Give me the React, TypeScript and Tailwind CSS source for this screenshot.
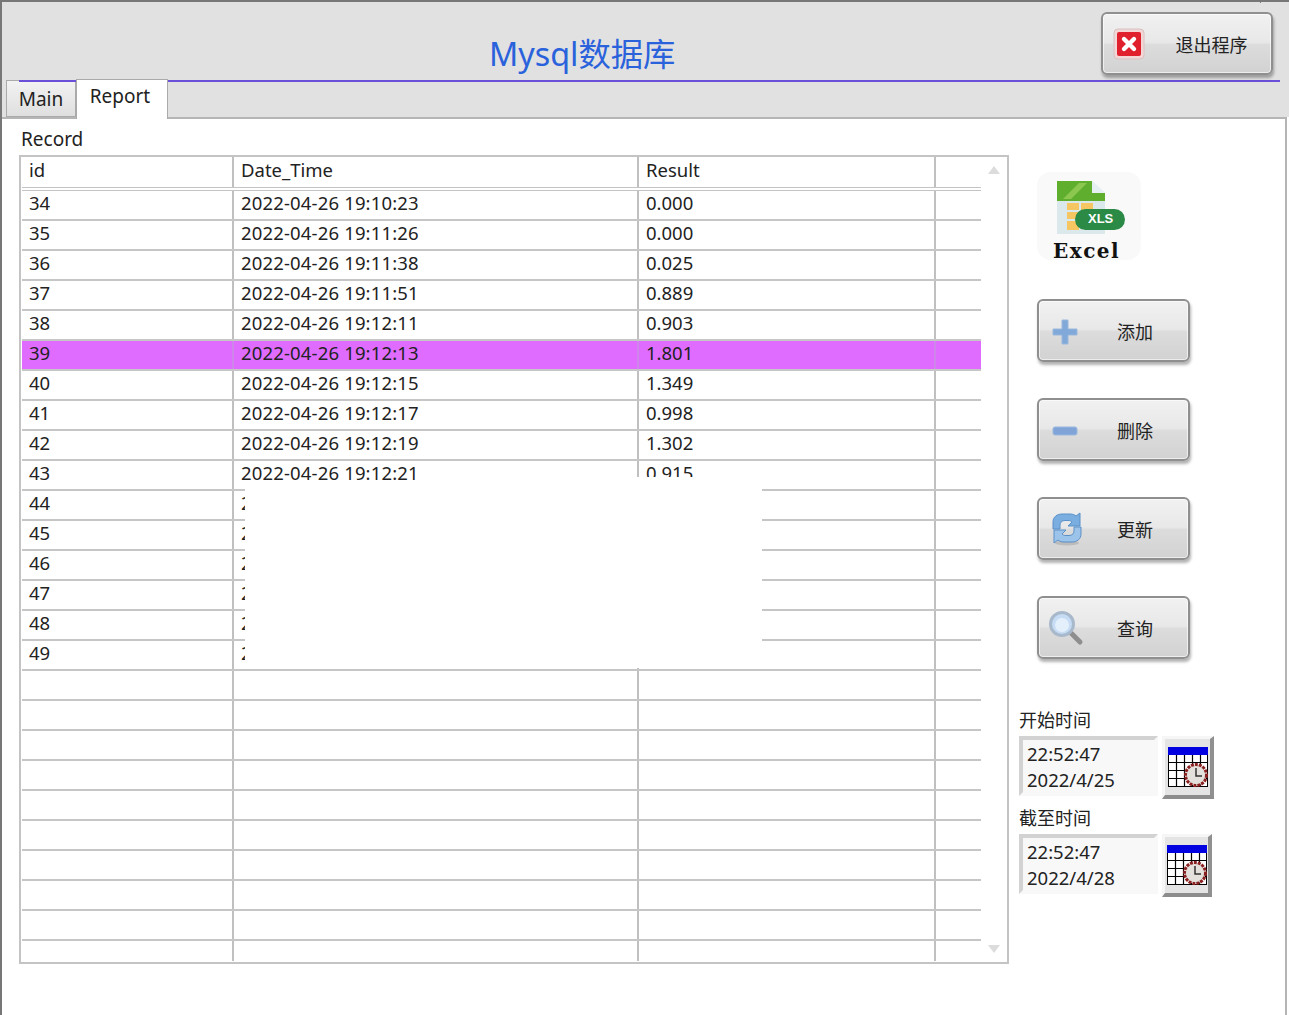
import type { ReactNode } from 'react';

const FONT = "font-['Noto_Sans','Noto_Sans_CJK_SC',sans-serif]";

const ROWS = [
  ['34', '2022-04-26 19:10:23', '0.000'],
  ['35', '2022-04-26 19:11:26', '0.000'],
  ['36', '2022-04-26 19:11:38', '0.025'],
  ['37', '2022-04-26 19:11:51', '0.889'],
  ['38', '2022-04-26 19:12:11', '0.903'],
  ['39', '2022-04-26 19:12:13', '1.801'],
  ['40', '2022-04-26 19:12:15', '1.349'],
  ['41', '2022-04-26 19:12:17', '0.998'],
  ['42', '2022-04-26 19:12:19', '1.302'],
  ['43', '2022-04-26 19:12:21', '0.915'],
  ['44', '2', ''],
  ['45', '2', ''],
  ['46', '2', ''],
  ['47', '2', ''],
  ['48', '2', ''],
  ['49', '2', ''],
  ['', '', ''],
  ['', '', ''],
  ['', '', ''],
  ['', '', ''],
  ['', '', ''],
  ['', '', ''],
  ['', '', ''],
  ['', '', ''],
  ['', '', ''],
  ['', '', ''],
];

function Row({ cells, hot }: { cells: string[]; hot?: boolean }) {
  const line = hot ? 'border-[#cf86ea]' : 'border-[#c0c0c0]';
  return (
    <div className={`flex h-[30px] shrink-0 border-b-2 border-b-[#c6c6c6] leading-[24px] ${hot ? 'bg-[#df6cff]' : ''}`}>
      <div className={`w-[212px] border-r-2 pl-[7px] ${line}`}>{cells[0]}</div>
      <div className={`w-[405px] border-r-2 pl-[7px] tracking-[0.16px] ${line}`}>{cells[1]}</div>
      <div className={`w-[297px] border-r-2 pl-[7px] ${line}`}>{cells[2]}</div>
      <div className="flex-1" />
    </div>
  );
}

function GlossButton({ icon, label, className }: { icon: ReactNode; label: string; className: string }) {
  return (
    <button
      className={`flex items-center rounded-[6px] border-2 border-[#8f8f8f] bg-[linear-gradient(#f1f1f1_0%,#e8e8e8_48%,#dcdcdc_52%,#d2d2d2_100%)] shadow-[inset_0_0_0_1px_rgba(255,255,255,0.6),1px_3px_3px_rgba(0,0,0,0.3)] text-[#222] text-[18px] ${className}`}
    >
      <div className="flex w-[46px] shrink-0 items-center">{icon}</div>
      <span className="flex-1 pt-[3px] text-center">{label}</span>
    </button>
  );
}

function ExitIcon() {
  return (
    <svg viewBox="0 0 32 32" className="ml-[7px] h-[32px] w-[32px] shrink-0">
      <rect x="1" y="1" width="30" height="30" rx="4" fill="#f3d7d7" stroke="#d8c0c0" />
      <rect x="4" y="4" width="24" height="24" rx="2" fill="#e0202c" />
      <path d="M11 11l10 10M21 11l-10 10" stroke="#fff" strokeWidth="4.4" strokeLinecap="round" />
    </svg>
  );
}

function PlusIcon() {
  return (
    <svg viewBox="0 0 26 26" className="ml-[13px] mt-[2px] h-[26px] w-[26px] shrink-0">
      <path d="M10 1h6v9h9v6h-9v9h-6v-9H1v-6h9z" fill="#80a8d8" stroke="#9ab8dc" strokeLinejoin="round" />
    </svg>
  );
}

function MinusIcon() {
  return (
    <svg viewBox="0 0 26 12" className="ml-[13px] mt-[2px] h-[12px] w-[26px] shrink-0">
      <rect x="1" y="2" width="24" height="8" rx="2" fill="#80a4d8" stroke="#9ab8dc" />
    </svg>
  );
}

function RefreshIcon() {
  return (
    <svg viewBox="0 0 32 34" className="ml-[12px] h-[34px] w-[32px] shrink-0">
      <ellipse cx="16" cy="31" rx="12" ry="2.5" fill="#bbb" />
      <path d="M2 17V10C2 5 6 2 11 2h8c3 0 5 1 6 2l4-3v13H17l4-4c-1-1-2-1.500-4-1.500h-3c-3 0-5 1.500-5 5v3.500z" fill="#7aaee0" stroke="#5a90c8" />
      <path d="M30 15v7c0 5-4 8-9 8h-8c-3 0-5-1-6-2l-4 3V18h12l-4 4c1 1 2 1.500 4 1.500h3c3 0 5-1.500 5-5V15z" fill="#9cc4ea" stroke="#5a90c8" />
    </svg>
  );
}

function SearchIcon() {
  return (
    <svg viewBox="0 0 36 36" className="ml-[9px] h-[36px] w-[36px] shrink-0">
      <path d="M21 21l11 11" stroke="#8e8e8e" strokeWidth="5" strokeLinecap="round" />
      <circle cx="14" cy="14" r="11.500" fill="#c6dcf5" stroke="#a9b9cc" strokeWidth="3" />
      <circle cx="14" cy="15" r="7" fill="#e3effb" />
    </svg>
  );
}

function ExcelIcon() {
  return (
    <div className="relative ml-[18px] h-[88px] w-[104px] rounded-[14px] bg-[#f9f9f9]">
      <svg viewBox="0 0 70 56" className="absolute left-[18px] top-[7px] h-[56px] w-[70px]">
        <path d="M2 2h35l13 12v41H2z" fill="#dbe8ec" />
        <path d="M2 2h35v12h13v8H2z" fill="#5fae2e" />
        <path d="M8 20L24 4h8L16 20z" fill="#8cc850" />
        <path d="M37 2l13 12H37z" fill="#e6eff1" />
        <path d="M12 24h12v7H12zM26 24h12v7H26zM12 33h12v7H12zM12 42h12v9H12z" fill="#f5c662" />
        <rect x="20" y="30" width="50" height="21" rx="10.500" fill="#2b8a45" />
      </svg>
      <span className="absolute left-[51px] top-[38px] font-['Liberation_Sans',sans-serif] text-[13px] leading-[17px] font-bold text-white">
        XLS
      </span>
      <span className="absolute left-[16px] top-[66px] font-['DejaVu_Serif',serif] text-[20px] leading-[26px] font-bold tracking-[1.500px] text-[#111]">
        Excel
      </span>
    </div>
  );
}

function CalendarButton({ className }: { className: string }) {
  return (
    <button
      className={`flex items-center justify-center border-t-[3px] border-l-[3px] border-r-[4px] border-b-[4px] border-t-[#f6f6f6] border-l-[#f6f6f6] border-r-[#909090] border-b-[#8c8c8c] bg-[#e4e4e4] ${className}`}
    >
      <svg viewBox="0 0 40 40" className="h-[40px] w-[40px]">
        <rect x="0.500" y="0.500" width="39" height="39" fill="#fff" stroke="#000" />
        <rect x="0" y="0" width="40" height="8" fill="#0000e0" />
        <path d="M0 15.500h40M0 23.500h40M0 31.500h40M8.500 8v32M16.500 8v32M24.500 8v32M32.500 8v32" stroke="#000" strokeWidth="1.200" />
        <circle cx="28" cy="28" r="10.500" fill="#e4e0dc" stroke="#8a2020" strokeWidth="3" strokeDasharray="3 1" />
        <path d="M28 21v8h6" fill="none" stroke="#333" strokeWidth="1.500" />
      </svg>
    </button>
  );
}

function DateField({ label, time, date, narrow }: { label: string; time: string; date: string; narrow?: boolean }) {
  return (
    <div>
      <div className="h-[29px] text-[18px] leading-[26px] text-[#222]">{label}</div>
      <div className="flex items-start">
        <div className="h-[60px] w-[139px] border-t-[4px] border-l-[4px] border-r-[4px] border-b-[4px] border-t-[#d2d2d2] border-l-[#d2d2d2] border-r-[#f8f8f8] border-b-[#f8f8f8] bg-[#f8f8f8] pl-[4px] pt-[1px] text-[18.500px] leading-[26px] text-[#222]">
          <div>{time}</div>
          <div>{date}</div>
        </div>
        <CalendarButton className={`ml-[4px] h-[63px] ${narrow ? 'w-[50px]' : 'w-[52px]'}`} />
      </div>
    </div>
  );
}

export default function App() {
  return (
    <div className={`relative flex h-[1015px] w-[1289px] flex-col overflow-hidden border-l-2 border-[#777] bg-white ${FONT}`}>
      <div className="absolute left-[1258px] top-0 h-[3px] w-[1px] bg-[#777]" />
      <div className="h-[117px] shrink-0 border-t-2 border-[#777] bg-[#e1e1e1]">
        <div className="relative z-10 ml-[17px] mr-[9px] flex h-[80px] border-b-2 border-[#6a4fd8]">
          <div className="ml-[470px] mt-[30px] text-[32.300px] leading-[42px] text-[#2a62dc]">Mysql数据库</div>
          <GlossButton
            icon={<ExitIcon />}
            label="退出程序"
            className="ml-auto mr-[7px] mt-[10px] h-[63px] w-[172px] pl-[3px]"
          />
        </div>
        <div className="-mt-[3px] ml-[4px] flex h-[39px] text-[#222] text-[19px]">
          <div className="mt-[1px] flex h-[37px] w-[70px] items-center justify-center border border-[#aaa] bg-[linear-gradient(#f2f2f2,#dfdfdf)] pt-[2px]">
            Main
          </div>
          <div className="relative z-20 flex h-[40px] w-[92px] justify-center border border-b-0 border-[#aaa] bg-white pr-[4px] leading-[33px]">
            Report
          </div>
        </div>
      </div>

      <div className="relative mr-[2px] flex min-h-0 flex-1 border-t-2 border-r-2 border-[#b5b5b5] pl-[17px] text-[18.500px] text-[#222]">
        <div className="w-[990px] shrink-0">
          <div className="h-[36px] pl-[2px] pt-[6px] text-[19px] leading-[28px]">Record</div>
          <div className="relative flex h-[809px] overflow-hidden border-2 border-[#c4c4c4]">
            <div className="ml-[1px] flex h-[804px] w-[959px] flex-col overflow-hidden">
              <div className="h-[34px] shrink-0 border-b-[4px] border-double border-[#c4c4c4]">
                <div className="flex h-[30px] leading-[26px]">
                  <div className="w-[212px] border-r-2 border-[#c0c0c0] pl-[7px]">id</div>
                  <div className="w-[405px] border-r-2 border-[#c0c0c0] pl-[7px]">Date_Time</div>
                  <div className="w-[297px] border-r-2 border-[#c0c0c0] pl-[7px]">Result</div>
                </div>
              </div>
              {ROWS.map((r, i) => (
                <Row key={i} cells={r} hot={r[0] === '39'} />
              ))}
            </div>
            <div className="relative flex flex-1 flex-col items-center justify-between py-[9px]">
              <svg viewBox="0 0 12 8" className="h-[8px] w-[12px]">
                <path d="M6 0l6 8H0z" fill="#dcdcdc" />
              </svg>
              <svg viewBox="0 0 12 8" className="h-[8px] w-[12px]">
                <path d="M0 0h12L6 8z" fill="#dcdcdc" />
              </svg>
            </div>
            {/* white patch over the middle of the grid */}
            <div className="absolute left-[224px] top-[326px] h-[185px] w-[517px] bg-white" />
            <div className="absolute left-[400px] top-[320px] h-[7px] w-[341px] bg-white" />
          </div>
        </div>
        <div className="pl-[10px] pt-[53px]">
          <ExcelIcon />
          <div className="ml-[18px] mt-[39px] flex flex-col gap-[36px]">
            <GlossButton icon={<PlusIcon />} label="添加" className="h-[63px] w-[153px] pr-[3px]" />
            <GlossButton icon={<MinusIcon />} label="删除" className="h-[63px] w-[153px] pr-[3px]" />
            <GlossButton icon={<RefreshIcon />} label="更新" className="h-[63px] w-[153px] pr-[3px]" />
            <GlossButton icon={<SearchIcon />} label="查询" className="h-[63px] w-[153px] pr-[3px]" />
          </div>
          <div className="mt-[48px] flex flex-col gap-[6px]">
            <DateField label="开始时间" time="22:52:47" date="2022/4/25" />
            <DateField label="截至时间" time="22:52:47" date="2022/4/28" narrow />
          </div>
        </div>
      </div>
    </div>
  );
}
